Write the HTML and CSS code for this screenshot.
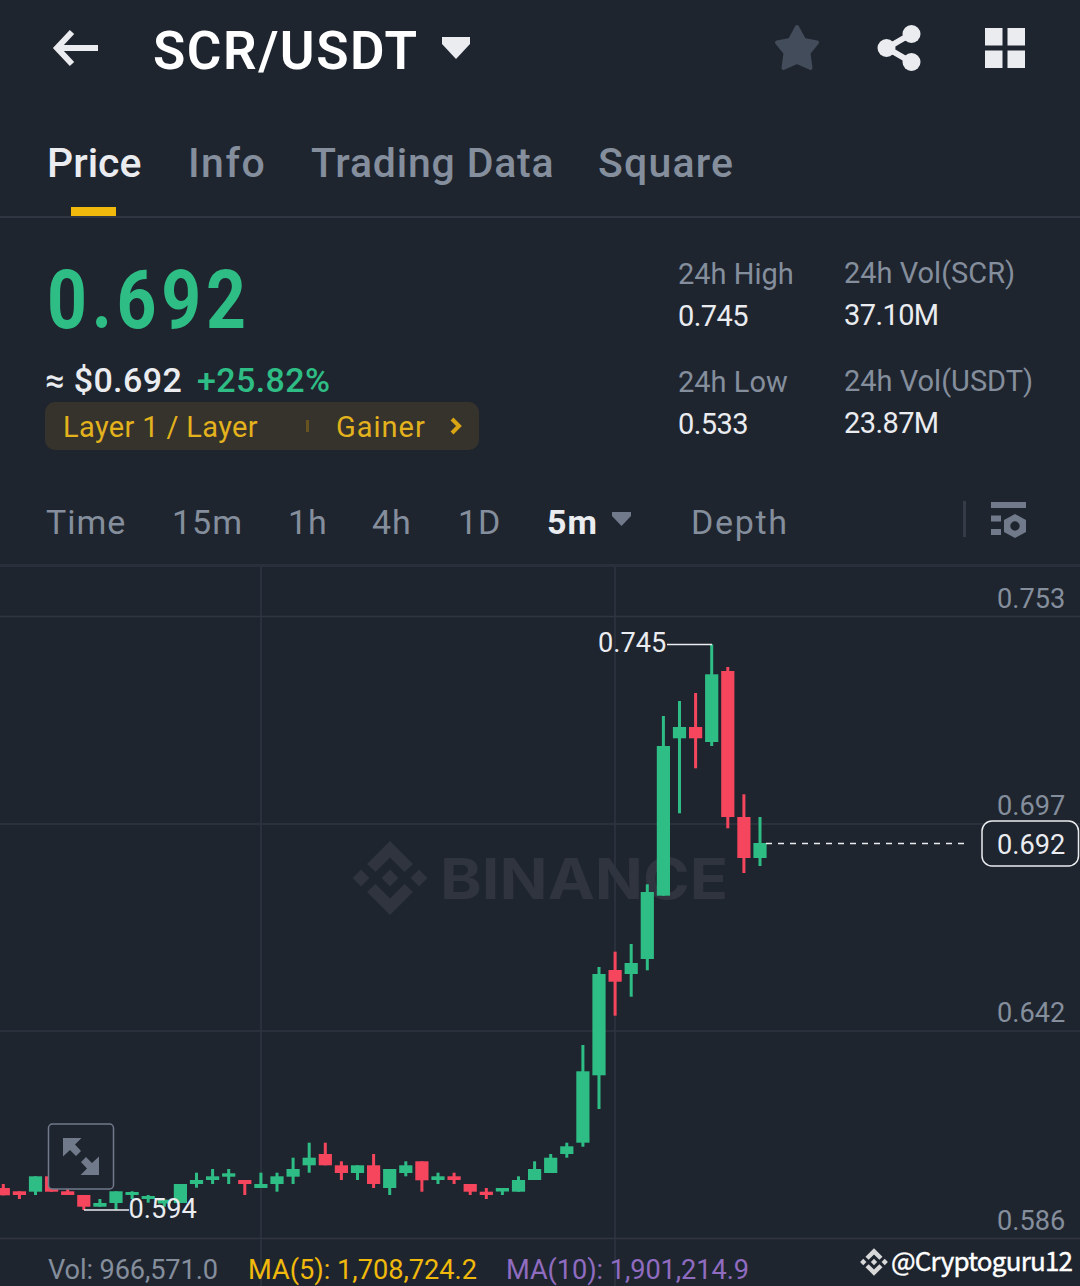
FILE: index.html
```html
<!DOCTYPE html>
<html lang="en">
<head>
    <meta charset="UTF-8">
    <meta name="viewport" content="width=device-width, initial-scale=1.0">
    <title>SCR/USDT</title>
    <link rel="stylesheet" href="styles.css">
</head>
<body>
    <header class="header">
        <svg class="back" width="46" height="38" viewBox="0 0 46 38">
            <path d="M20 3 L5 19 L20 35 M5 19 H46" fill="none" stroke="#eaecef" stroke-width="6"/>
        </svg>
        <h1 class="pair">SCR/USDT</h1>
        <svg class="pair-arrow" width="28" height="22" viewBox="0 0 28 22">
            <path d="M0 0H28V7L14 22L0 7Z" fill="#eaecef"/>
        </svg>
        <div class="actions">
            <svg width="46" height="48" viewBox="0 0 46 48">
                <path d="M23 3L30 16L43 18.500L34.500 29L36.500 44L23 38L9.500 44L11.500 29L3 18.500L16 16Z" fill="#434c5a" stroke="#434c5a" stroke-width="4" stroke-linejoin="round"/>
            </svg>
            <svg width="44" height="48" viewBox="0 0 44 48">
                <path d="M34 10L10 24L34 38" fill="none" stroke="#eaecef" stroke-width="6"/>
                <circle cx="34.500" cy="10" r="9" fill="#eaecef"/>
                <circle cx="9.500" cy="24" r="9" fill="#eaecef"/>
                <circle cx="34.500" cy="38" r="9" fill="#eaecef"/>
            </svg>
            <svg width="40" height="40" viewBox="0 0 40 40">
                <path d="M0 0H17.500V17.500H0ZM22.500 0H40V17.500H22.500ZM0 22.500H17.500V40H0ZM22.500 22.500H40V40H22.500Z" fill="#eaecef"/>
            </svg>
        </div>
    </header>

    <nav class="tabs">
        <a class="tab active">Price</a>
        <a class="tab info">Info</a>
        <a class="tab trading">Trading Data</a>
        <a class="tab square">Square</a>
    </nav>

    <section class="summary">
        <div class="quote">
            <div class="price">0.692</div>
            <div class="sub"><span class="fiat">≈ $0.692</span><span class="change">+25.82%</span></div>
            <div class="tags">
                <span class="tag-layer">Layer 1 / Layer</span>
                <i class="tag-sep"></i>
                <span class="tag-gainer">Gainer</span>
                <svg width="12" height="18" viewBox="0 0 12 18">
                    <path d="M2 2L9 9L2 16" fill="none" stroke="#d9a514" stroke-width="4"/>
                </svg>
            </div>
        </div>
        <div class="stats">
            <div class="stat"><span class="label high">24h High</span><span class="value">0.745</span></div>
            <div class="stat"><span class="label low">24h Low</span><span class="value">0.533</span></div>
        </div>
        <div class="stats volume">
            <div class="stat"><span class="label scr">24h Vol(SCR)</span><span class="value">37.10M</span></div>
            <div class="stat"><span class="label usdt">24h Vol(USDT)</span><span class="value">23.87M</span></div>
        </div>
    </section>

    <nav class="intervals">
        <span class="iv time">Time</span>
        <span class="iv m15">15m</span>
        <span class="iv h1">1h</span>
        <span class="iv h4">4h</span>
        <span class="iv d1">1D</span>
        <span class="iv m5">5m
            <svg width="19" height="14" viewBox="0 0 19 14"><path d="M0 0H19V4L9.500 14L0 4Z" fill="#707a8a"/></svg>
        </span>
        <span class="iv depth">Depth</span>
        <i class="divider"></i>
        <svg class="settings" width="36" height="38" viewBox="0 0 36 38">
            <path d="M0 1H35V7H0ZM0 14.500H10V20.500H0ZM0 28H10V34H0Z" fill="#707a8a"/>
            <path fill-rule="evenodd" d="M24 13L35 19V31L24 37L13 31V19ZM24 20.300A4.700 4.700 0 1 0 24 29.700A4.700 4.700 0 1 0 24 20.300Z" fill="#707a8a"/>
        </svg>
    </nav>

    <main class="chart">
        <svg width="1080" height="719" viewBox="0 567 1080 719">
            <defs>
                <g id="logo">
                    <path d="M0-37L23-14L14.500-6L0-20.500L-14.500-6L-23-14Z"/>
                    <path d="M0 37L23 14L14.500 6L0 20.500L-14.500 6L-23 14Z"/>
                    <path d="M0-8.500L8.500 0L0 8.500L-8.500 0Z"/>
                    <path d="M-29-8.500L-20.500 0L-29 8.500L-37.500 0Z"/>
                    <path d="M29-8.500L37.500 0L29 8.500L20.500 0Z"/>
                </g>
            </defs>
            <g class="watermark">
                <use href="#logo" x="390" y="878"/>
                <text x="440" y="899" textLength="288" lengthAdjust="spacingAndGlyphs">BINANCE</text>
            </g>
            <path class="grid" d="M261 567V1286M615 567V1286M0 616.500H1080M0 824H1080M0 1031H1080M0 1238.500H1080"/>
            <g id="candles"></g>

            <path class="marker" d="M667 644.500H712M84 1210H129"/>
            <text class="mark" x="598" y="652">0.745</text>
            <text class="mark" x="128.500" y="1218">0.594</text>
            <path class="last" d="M766 843.500H966"/>

            <text class="axis" x="997" y="608">0.753</text>
            <text class="axis" x="997" y="815">0.697</text>
            <text class="axis" x="997" y="1022">0.642</text>
            <text class="axis" x="997" y="1230">0.586</text>
            <rect class="pill" x="982" y="821" width="96.500" height="45" rx="10"/>
            <text class="mark" x="997" y="854">0.692</text>

            <rect class="expand" x="48.500" y="1124" width="65" height="65" rx="4"/>
            <path fill="#707a8a" d="M63 1138H81.500L75 1144.500L81 1151L76 1156L70 1150L63 1156.500ZM99 1175H80.500L87 1168.500L81 1162L86 1157L92 1163L99 1156.500Z"/>

            <text class="vol" x="48" y="1279" textLength="170">Vol: 966,571.0</text>
            <text class="vol ma5" x="248" y="1279" textLength="229">MA(5): 1,708,724.2</text>
            <text class="vol ma10" x="506" y="1279" textLength="243">MA(10): 1,901,214.9</text>
            <g fill="#d8d8d8" transform="translate(874 1262) scale(.37)"><use href="#logo"/></g>
            <text class="author" x="891" y="1271" textLength="182">@Cryptoguru12</text>
        </svg>
    </main>

    <script>
        // direction, wick top, body top, body bottom, wick bottom
        const candles = [
            ['r', 1184, 1188, 1195.3, 1195.3], ['r', 1191.3, 1191.3, 1195, 1199],
            ['g', 1176.3, 1176.3, 1191.7, 1195], ['r', 1176.3, 1176.3, 1191.7, 1191.7],
            ['r', 1188, 1191.3, 1195, 1195], ['r', 1195, 1195, 1206.7, 1210],
            ['g', 1199, 1203, 1206.7, 1206.7], ['g', 1191.3, 1191.3, 1203, 1209.7],
            ['g', 1191.3, 1192, 1195, 1199], ['g', 1195, 1196, 1199, 1202.7],
            ['g', 1199.7, 1199.7, 1203.5, 1206.7], ['g', 1184, 1184, 1203, 1203],
            ['g', 1172.7, 1180, 1184, 1187.7], ['g', 1169, 1176.3, 1180, 1184],
            ['g', 1169, 1173.3, 1176.7, 1184], ['r', 1180, 1180, 1184, 1195],
            ['g', 1172.7, 1184, 1188, 1188], ['g', 1172.7, 1176.3, 1184, 1191.7],
            ['g', 1157.7, 1169, 1176.7, 1184], ['g', 1142.7, 1157.7, 1165.3, 1172.7],
            ['r', 1142.7, 1154, 1165.3, 1165.3], ['r', 1161.3, 1165.3, 1173, 1180],
            ['g', 1165.3, 1165.3, 1173, 1180], ['r', 1154, 1165.3, 1184, 1188],
            ['g', 1169, 1169, 1188, 1195], ['g', 1161.3, 1165.3, 1173, 1176.3],
            ['r', 1161.3, 1161.3, 1180.3, 1191.7], ['g', 1172.7, 1176.3, 1180, 1184],
            ['r', 1172.7, 1176.3, 1180, 1184], ['r', 1184, 1184, 1191.7, 1195],
            ['r', 1188, 1191.7, 1195, 1199], ['g', 1188, 1188, 1191.5, 1195],
            ['g', 1176.3, 1180, 1191.7, 1191.7], ['g', 1161.3, 1169, 1180, 1180],
            ['g', 1154, 1157.7, 1173, 1173], ['g', 1142.7, 1146.3, 1154, 1157.7],
            ['g', 1045, 1071.3, 1142.7, 1146.7], ['g', 967, 974, 1075.3, 1109],
            ['r', 951.7, 970, 981.7, 1015.7], ['g', 944, 963, 974, 996.7],
            ['g', 884.3, 892, 959, 970.3], ['g', 716, 746, 895.7, 895.7],
            ['g', 701, 727, 738.3, 813.3], ['r', 693, 727, 738.3, 768.3],
            ['g', 644.3, 674.3, 742, 746], ['r', 667, 671, 817, 828.3],
            ['r', 794.3, 817, 858, 873], ['g', 817, 843, 858, 866]
        ];
        const step = 16.1;

        document.getElementById('candles').innerHTML = candles.map(([dir, high, top, bottom, low], i) => {
            const x = 3.3 + i * step;
            return `<g class="${dir === 'g' ? 'up' : 'down'}">
                <rect x="${x - 1.5}" y="${high}" width="3" height="${low - high}"/>
                <rect x="${x - 6.6}" y="${top}" width="13.2" height="${bottom - top}"/>
            </g>`;
        }).join('');
    </script>
</body>
</html>
```
FILE: styles.css
```css
* {
    box-sizing: border-box;
}
body {
    margin: 0;
    width: 1080px;
    height: 1286px;
    overflow: hidden;
    background: #1f252f;
    color: #eaecef;
    font-family: Roboto, "Liberation Sans", sans-serif;
}
svg {
    display: block;
    flex: none;
}
.header {
    display: flex;
    align-items: center;
    height: 96px;
    padding: 0 55px 0 52px;
}
.pair {
    width: 289px;
    margin: 5px 0 0 55px;
    font-size: 53px;
    font-weight: 600;
    letter-spacing: 1.5px;
    color: #fff;
    white-space: nowrap;
}
.actions {
    display: flex;
    align-items: center;
    margin-left: auto;
}
.actions svg + svg {
    margin-left: 57px;
}
.actions svg + svg + svg {
    margin-left: 64px;
}
.tabs {
    display: flex;
    height: 122px;
    padding: 14px 0 0 47px;
    border-bottom: 2px solid #303642;
    font-size: 41px;
    font-weight: 500;
    line-height: 106px;
    color: #848e9c;
    white-space: nowrap;
}
.tab {
    flex: none;
}
.tab.active {
    width: 141px;
    color: #eaecef;
}
.tab.active::after {
    content: "";
    display: block;
    width: 45px;
    height: 9px;
    margin: -9px 0 0 24px;
    background: #f0b90b;
}
.tab.info {
    width: 123px;
    letter-spacing: 1.5px;
}
.tab.trading {
    width: 287px;
    letter-spacing: 0.8px;
}
.tab.square {
    letter-spacing: 1.2px;
}
.summary {
    display: flex;
    height: 264px;
    white-space: nowrap;
}
.quote {
    flex: none;
    width: 678px;
    padding: 40px 0 0 45px;
}
.price {
    width: 260px;
    height: 84px;
    margin: 0 0 16px 2px;
    font-size: 82px;
    font-weight: 700;
    line-height: 84px;
    letter-spacing: 5.5px;
    color: #2ebd85;
    transform: scaleX(0.85);
    transform-origin: left;
}
.sub {
    display: flex;
    height: 44px;
    font-size: 34px;
    font-weight: 500;
    line-height: 44px;
    letter-spacing: 0.4px;
}
.fiat {
    width: 152px;
}
.change {
    color: #2ebd85;
}
.tags {
    display: flex;
    align-items: center;
    width: 434px;
    height: 48px;
    padding: 0 17px 0 18px;
    border-radius: 10px;
    background: #35332c;
    font-size: 29px;
    line-height: 46px;
    color: #e3b21c;
}
.tag-layer {
    width: 243px;
    padding-top: 2px;
    letter-spacing: 0.35px;
}
.tag-sep {
    width: 3px;
    height: 12px;
    background: #66531f;
}
.tag-gainer {
    width: 114px;
    margin-left: 27px;
    padding-top: 2px;
    letter-spacing: 1px;
}
.stats {
    flex: none;
    width: 166px;
    padding-top: 35px;
    font-size: 29px;
}
.stats.volume {
    width: 236px;
    padding-top: 34px;
}
.stat {
    display: flex;
    flex-direction: column;
    margin-bottom: 24px;
    line-height: 42px;
}
.label {
    color: #848e9c;
}
.value {
    letter-spacing: -0.6px;
}
.intervals {
    display: flex;
    align-items: center;
    height: 85px;
    padding-left: 46px;
    border-bottom: 3px solid #2a303b;
    font-size: 34px;
    color: #848e9c;
}
.iv {
    flex: none;
    margin-top: -2px;
    letter-spacing: 1px;
}
.time {
    width: 126px;
}
.m15 {
    width: 116px;
}
.h1 {
    width: 84px;
}
.h4 {
    width: 86px;
}
.d1 {
    width: 89px;
}
.m5 {
    display: flex;
    justify-content: space-between;
    align-items: center;
    width: 84px;
    font-weight: 700;
    color: #eaecef;
}
.m5 svg {
    margin-top: -6px;
}
.depth {
    margin-left: 60px;
    letter-spacing: 1.7px;
}
.divider {
    width: 3px;
    height: 36px;
    margin: -8px 25px 0 auto;
    background: #353b47;
}
.settings {
    margin: -6px 53px 0 0;
}
.watermark {
    fill: #2f343f;
    font-family: Inter, sans-serif;
    font-size: 57px;
    font-weight: 700;
}
.grid {
    fill: none;
    stroke: #303641;
    stroke-width: 1.5;
}
.up {
    fill: #2ebd85;
}
.down {
    fill: #f6465d;
}
.marker {
    stroke: #eaecef;
    stroke-width: 1.5;
}
.mark,
.axis,
.vol {
    font-size: 27.2px;
    fill: #eaecef;
}
.axis,
.vol {
    fill: #848e9c;
}
.last {
    stroke: #eaecef;
    stroke-width: 1.5;
    stroke-dasharray: 6 6;
}
.pill {
    fill: #1f252f;
    stroke: #eaecef;
    stroke-width: 1.5;
}
.expand {
    fill: #1f252f;
    stroke: #707a8a;
    stroke-width: 1.5;
}
.vol.ma5 {
    fill: #f0b90b;
}
.vol.ma10 {
    fill: #8f6cc0;
}
.author {
    font-family: "Noto Sans CJK SC", sans-serif;
    font-size: 26px;
    font-weight: 400;
    fill: #fff;
    stroke: #fff;
    stroke-width: 0.4;
}
```
